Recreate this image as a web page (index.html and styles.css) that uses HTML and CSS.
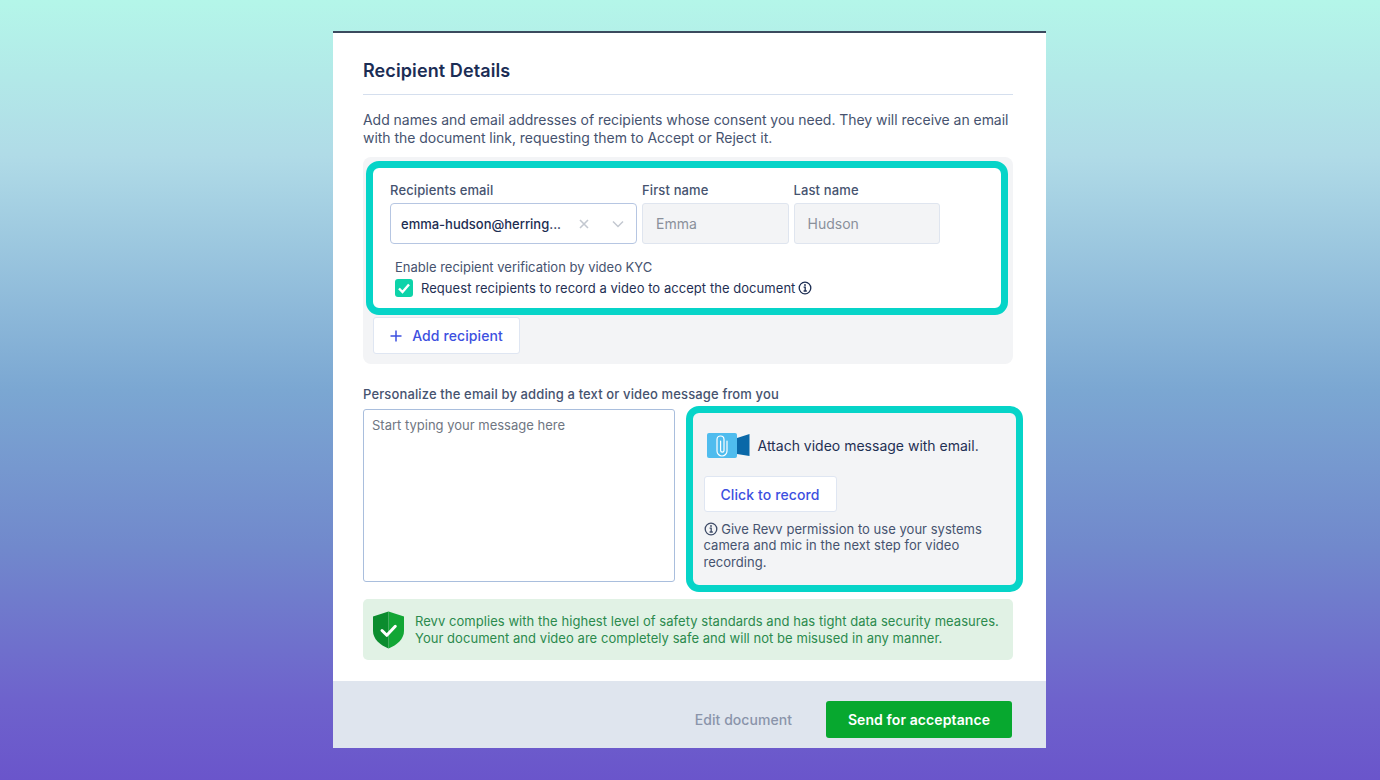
FILE: index.html
```html
<!DOCTYPE html>
<html lang="en">
<head>
<meta charset="utf-8">
<title>Recipient Details</title>
<link rel="stylesheet" href="styles.css">
</head>
<body>
<main class="card">
  <div class="content">
    <h1 class="title">Recipient Details</h1>
    <p class="intro">Add names and email addresses of recipients whose consent you need. They will receive an email with the document link, requesting them to Accept or Reject it.</p>
    <section class="panel">
      <div class="highlight">
        <div class="fields">
          <div class="field field-email">
            <span class="label">Recipients email</span>
            <div class="select">
              <span class="select-value">emma-hudson@herring...</span>
              <svg class="select-clear" viewBox="0 0 10 10"><path d="M1 1l8 8M9 1l-8 8"/></svg>
              <svg class="select-arrow" viewBox="0 0 12 8"><path d="M1 1.5l5 5 5-5"/></svg>
            </div>
          </div>
          <div class="field">
            <span class="label">First name</span>
            <div class="input-disabled">Emma</div>
          </div>
          <div class="field">
            <span class="label">Last name</span>
            <div class="input-disabled">Hudson</div>
          </div>
        </div>
        <div class="kyc">
          <div class="kyc-title">Enable recipient verification by video KYC</div>
          <div class="kyc-row">
            <span class="checkbox"><svg viewBox="0 0 18 18"><path d="M4 9.5l3.5 3.5 6.5-7.5"/></svg></span>
            <span class="kyc-text">Request recipients to record a video to accept the document</span>
            <svg class="info info-dark" viewBox="0 0 14 14"><circle cx="7" cy="7" r="5.8"/><path d="M5.6 6.2H7.2V10M5.6 10H8.8"/><circle class="dot" cx="7" cy="4" r="0.9"/></svg>
          </div>
        </div>
      </div>
      <button class="btn btn-add" type="button">
        <svg class="plus" viewBox="0 0 12 12"><path d="M6 0.5v11M0.5 6h11"/></svg>
        <span>Add recipient</span>
      </button>
    </section>
    <div class="label label-message">Personalize the email by adding a text or video message from you</div>
    <div class="message-row">
      <div class="textarea">Start typing your message here</div>
      <div class="video-box">
        <div class="video-head">
          <svg class="video-icon" width="44" height="27" viewBox="0 0 44 27">
            <rect x="0" y="1" width="30" height="25" rx="2" fill="#4fbcee"/>
            <path d="M30 6L42.500 2V24L30 22Z" fill="#0a68a8"/>
            <path d="M20 9V19a5 5 0 0 1-10 0V7.500a3.500 3.500 0 0 1 7 0V18.500a1.700 1.700 0 0 1-3.400 0V9" fill="none" stroke="#fff" stroke-width="1.200" stroke-linecap="round"/>
          </svg>
          <span class="video-title">Attach video message with email.</span>
        </div>
        <button class="btn btn-record" type="button">Click to record</button>
        <p class="video-note"><svg class="info info-note" viewBox="0 0 14 14"><circle cx="7" cy="7" r="5.8"/><path d="M5.600 6.200H7.200V10M5.600 10H8.800"/><circle class="dot" cx="7" cy="4" r="0.900"/></svg> Give Revv permission to use your systems camera and mic in the next step for video recording.</p>
      </div>
    </div>
    <div class="notice">
      <svg class="shield" width="33" height="38" viewBox="0 0 33 38">
        <path d="M16.500 0.500L32 5.500V20C32 28 25 34 16.500 37.500Z" fill="#12a635"/>
        <path d="M16.500 0.500L1 5.500V20C1 28 8 34 16.500 37.500Z" fill="#0b8c2e"/>
        <path d="M10 19.500l4.800 4.800 8.500-9" fill="none" stroke="#fff" stroke-width="3" stroke-linecap="round" stroke-linejoin="round"/>
      </svg>
      <p class="notice-text">Revv complies with the highest level of safety standards and has tight data security measures. Your document and video are completely safe and will not be misused in any manner.</p>
    </div>
  </div>
  <footer class="footer">
    <span class="edit-link">Edit document</span>
    <button class="btn-send" type="button">Send for acceptance</button>
  </footer>
</main>
</body>
</html>
```
FILE: styles.css
```css
* { box-sizing: border-box; }
html, body { height: 100%; }
body {
  margin: 0;
  height: 780px;
  overflow: hidden;
  padding-top: 31px;
  background: linear-gradient(180deg, #b4f6e9 0%, #b0dbe7 20%, #7ba7d2 50%, #7189cc 70%, #6e62cc 90%, #6a55cb 100%);
  font-family: Inter, "Liberation Sans", sans-serif;
  color: #1c2d52;
}
.card {
  width: 713px;
  height: 717px;
  margin-left: 333px;
  background: #fff;
  border-top: 2px solid #3b4a5e;
  display: flex;
  flex-direction: column;
}
.content { flex: 1; padding: 0 33px 0 30px; }
.title {
  margin: 0;
  padding: 26px 0 11px;
  font-size: 18px;
  line-height: 24px;
  font-weight: 600;
  color: #1b2d55;
  border-bottom: 1px solid #d5dfee;
  letter-spacing: 0.1px;
}
.intro {
  margin: 16px 0 10px;
  font-size: 14px;
  line-height: 18px;
  color: #46536f;
  letter-spacing: -0.04px;
}
.panel {
  background: #f3f4f6;
  border-radius: 8px;
  height: 207px;
  padding: 4px 5px 10px 3px;
}
.highlight {
  height: 154px;
  background: #fff;
  border: 7px solid #06d4c8;
  border-radius: 13px;
  padding: 13px 17px 0;
}
.fields { display: flex; gap: 5px; }
.field { display: flex; flex-direction: column; gap: 4px; width: 146.500px; }
.field-email { width: 247px; }
.label {
  font-size: 13px;
  line-height: 18px;
  font-weight: 450;
  color: #46536f;
  letter-spacing: 0.13px;
}
.select {
  height: 41px;
  border: 1px solid #b6c6e2;
  border-radius: 4px;
  background: #fff;
  display: flex;
  align-items: center;
  padding-left: 10px;
}
.select-value { font-size: 13px; font-weight: 500; color: #1c2d52; width: 168px; white-space: nowrap; }
.select-clear { width: 10px; height: 10px; margin-left: 10px; fill: none; stroke: #c3c8d0; stroke-width: 1.6; }
.select-arrow { width: 12px; height: 8px; margin-left: 23px; fill: none; stroke: #c3c8d0; stroke-width: 1.5; }
.input-disabled {
  height: 41px;
  border: 1px solid #dfe5ef;
  border-radius: 3px;
  background: #f3f4f6;
  display: flex;
  align-items: center;
  padding-left: 13px;
  font-size: 14px;
  color: #8a909b;
}
.kyc { padding-left: 5px; margin-top: 14px; }
.kyc-title { font-size: 13px; line-height: 18px; color: #46536f; }
.kyc-row { display: flex; align-items: center; margin-top: 3px; height: 18px; }
.checkbox {
  width: 18px;
  height: 18px;
  border-radius: 3px;
  background: #0dd3a9;
  margin-right: 8px;
  display: flex;
}
.checkbox svg { width: 18px; height: 18px; fill: none; stroke: #fff; stroke-width: 2.400; }
.kyc-text { font-size: 13px; color: #1f3054; letter-spacing: 0.05px; }
.info { width: 14px; height: 14px; fill: none; stroke-width: 1.300; }
.info .dot { stroke: none; }
.info-dark { stroke: #1c2d52; margin-left: 3px; }
.info-dark .dot { fill: #1c2d52; }
.info-note { stroke: #3f4c68; vertical-align: -2px; }
.info-note .dot { fill: #3f4c68; }
.btn {
  display: flex;
  align-items: center;
  justify-content: center;
  background: #fff;
  border: 1px solid #dfe6f2;
  border-radius: 3px;
  font-family: inherit;
  font-size: 14px;
  font-weight: 500;
  letter-spacing: 0.1px;
  color: #3d50e0;
}
.btn-add { width: 147px; height: 37px; margin: 2px 0 0 7px; gap: 10px; padding: 0; }
.plus { width: 12px; height: 12px; fill: none; stroke: #3d50e0; stroke-width: 1.500; }
.label-message { margin-top: 21px; margin-bottom: 3px; }
.message-row { display: flex; gap: 11px; margin-right: -10px; align-items: flex-start; }
.textarea {
  width: 312px;
  height: 173px;
  margin-top: 3px;
  border: 1px solid #a9bedd;
  border-radius: 3px;
  padding: 7px 8px;
  font-size: 13px;
  line-height: 17px;
  color: #6f7682;
}
.video-box {
  width: 338px;
  height: 186px;
  border: 7px solid #06d4c8;
  border-radius: 13px;
  background: #f3f4f6;
  padding: 19px 11px 0;
}
.video-head { display: flex; align-items: center; padding-left: 3px; height: 27px; }
.video-icon { flex: none; }
.video-title { margin-left: 7px; font-size: 14px; color: #1f3054; }
.btn-record { width: 133px; height: 36px; margin-top: 17px; padding: 0; }
.video-note {
  margin: 9px 0 0;
  font-size: 13px;
  line-height: 16.300px;
  color: #46536f;
  letter-spacing: 0.03px;
  width: 290px;
}
.notice {
  margin-top: 7px;
  height: 61px;
  background: #e1f2e5;
  border-radius: 5px;
  display: flex;
  align-items: center;
  padding-left: 9px;
}
.shield { flex: none; }
.notice-text {
  margin: 0 0 0 10px;
  font-size: 13px;
  line-height: 17px;
  color: #2b8a4d;
  letter-spacing: 0.05px;
  width: 590px;
}
.footer {
  height: 67px;
  background: #dfe5ee;
  display: flex;
  justify-content: flex-end;
  align-items: flex-start;
  gap: 34px;
  padding: 20px 34px 0 0;
}
.edit-link { font-size: 14px; line-height: 37px; font-weight: 500; letter-spacing: 0.05px; color: #8a94aa; }
.btn-send {
  width: 186px;
  height: 37px;
  border: 0;
  border-radius: 3px;
  background: #07a82f;
  color: #fff;
  font-family: inherit;
  font-size: 14px;
  font-weight: 600;
  letter-spacing: 0.1px;
  padding: 0;
}
```
